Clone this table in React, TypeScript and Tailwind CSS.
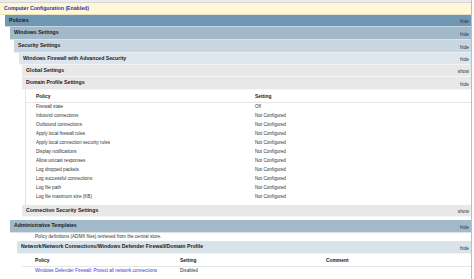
import React from "react";

const font = { fontFamily: '"Liberation Sans", Arial, sans-serif' };

function Bar({
  label,
  indent,
  bg,
  action = "hide",
  h = "h-[12px]",
}: {
  label: string;
  indent: string;
  bg: string;
  action?: string;
  h?: string;
}) {
  return (
    <div className={`${indent}`}>
      <div className={`${bg} ${h} flex items-stretch justify-between border-b border-white/60`}>
        <span className="pl-[4px] self-center font-bold text-[5.2px] text-[#1a1a1a] leading-none">{label}</span>
        <span className="pr-[2px] self-end pb-[1px] text-[4.8px] text-[#333] leading-none">{action}</span>
      </div>
    </div>
  );
}

const rows = [
  "Firewall state",
  "Inbound connections",
  "Outbound connections",
  "Apply local firewall rules",
  "Apply local connection security rules",
  "Display notifications",
  "Allow unicast responses",
  "Log dropped packets",
  "Log successful connections",
  "Log file path",
  "Log file maximum size (KB)",
];

export default function App() {
  return (
    <div className="w-[474px] h-[279px] overflow-hidden bg-white relative" style={font}>
      <div className="w-[472px] border-r border-[#bdbdbd] h-full">
        <div className="h-[3px] bg-[#ececec] border-b border-[#d6d6d6]" />
        <div className="h-[12px] bg-[#fff8d6] flex items-center border-b border-[#e9e2c2]">
          <span className="pl-[4px] text-[5.2px] text-[#2e2ea8] font-bold leading-none">
            Computer Configuration (Enabled)
          </span>
        </div>
        <Bar label="Policies" indent="pl-[5px]" bg="bg-[#7098b4]" />
        <Bar label="Windows Settings" indent="pl-[10px]" bg="bg-[#a2b9c9]" h="h-[13px]" />
        <Bar label="Security Settings" indent="pl-[14px]" bg="bg-[#c7d6e0]" h="h-[13px]" />
        <Bar label="Windows Firewall with Advanced Security" indent="pl-[19px]" bg="bg-[#dde6ec]" />
        <Bar label="Global Settings" indent="pl-[22px]" bg="bg-[#e8e8e8]" action="show" h="h-[12px]" />
        <Bar label="Domain Profile Settings" indent="pl-[22px]" bg="bg-[#e8e8e8]" h="h-[13px]" />
        <div className="pl-[25px]">
          <div className="border-l border-[#e3e3e3] pt-[3px] pb-[3px]">
            <div className="h-[10px] flex items-center border-b border-[#e6e6e6] text-[4.9px] font-bold text-[#222] leading-none">
              <span className="pl-[10px] w-[229px]">Policy</span>
              <span>Setting</span>
            </div>
            {rows.map((r, i) => (
              <div key={r} className="h-[9px] flex items-center text-[4.6px] text-[#333] leading-none">
                <span className="pl-[10px] w-[229px]">{r}</span>
                <span>{i === 0 ? "Off" : "Not Configured"}</span>
              </div>
            ))}
          </div>
        </div>
        <Bar label="Connection Security Settings" indent="pl-[22px]" bg="bg-[#e8e8e8]" action="show" h="h-[12px]" />
        <div className="h-[3px]" />
        <Bar label="Administrative Templates" indent="pl-[10px]" bg="bg-[#a2b9c9]" h="h-[13px]" />
        <div className="pl-[35px] h-[8px] flex items-center text-[4.6px] text-[#333] leading-none">
          Policy definitions (ADMX files) retrieved from the central store.
        </div>
        <Bar
          label="Network/Network Connections/Windows Defender Firewall/Domain Profile"
          indent="pl-[17px]"
          bg="bg-[#d9e3ea]"
          h="h-[13px]"
        />
        <div className="pl-[22px]">
          <div className="pt-[3px]">
            <div className="h-[10px] flex items-center border-b border-[#e6e6e6] text-[4.9px] font-bold text-[#222] leading-none">
              <span className="pl-[13px] w-[158px]">Policy</span>
              <span className="w-[146px]">Setting</span>
              <span>Comment</span>
            </div>
            <div className="h-[9px] flex items-center text-[4.6px] leading-none">
              <span className="pl-[13px] w-[158px] text-[#3a3ad0]">
                Windows Defender Firewall: Protect all network connections
              </span>
              <span className="w-[146px] text-[#333]">Disabled</span>
              <span></span>
            </div>
          </div>
        </div>
      </div>
    </div>
  );
}
